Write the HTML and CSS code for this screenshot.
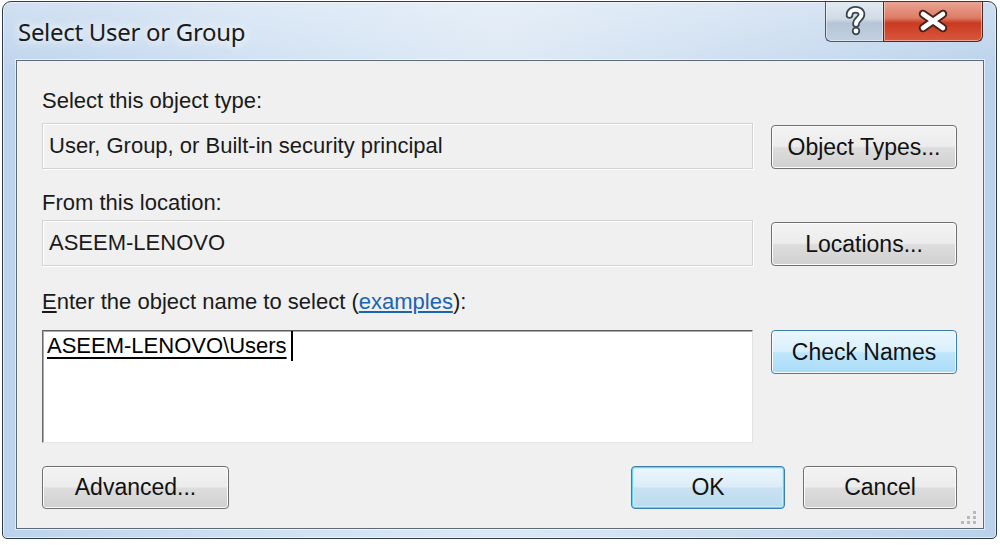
FILE: index.html
```html
<!DOCTYPE html>
<html>
<head>
    <meta charset="UTF-8">
    <title>Select User or Group</title>
    <link rel="stylesheet" href="styles.css">
</head>
<body>
    <div class="window">
        <!-- 标题栏 -->
        <div class="titlebar">
            <div class="title">Select User or Group</div>
            <div class="caption-btns">
                <div class="cap-btn help">
                    <svg width="26" height="32" viewBox="-13 -16 26 32">
                        <path d="M-5.5 -6 C-5.5 -13 6.5 -13 6.5 -6.5 C6.5 -2.5 1 -1.8 1 3" fill="none" stroke="#3a4552" stroke-width="7.5" stroke-linecap="round"/>
                        <circle cx="1" cy="10" r="4.2" fill="#3a4552"/>
                        <path d="M-5.5 -6 C-5.5 -13 6.5 -13 6.5 -6.5 C6.5 -2.5 1 -1.8 1 3" fill="none" stroke="#fff" stroke-width="4" stroke-linecap="round"/>
                        <circle cx="1" cy="10" r="2.4" fill="#fff"/>
                    </svg>
                </div>
                <div class="cap-btn close">
                    <svg width="34" height="26" viewBox="-17 -13 34 26">
                        <path d="M-10 -7 L10 7 M10 -7 L-10 7" stroke="#4a2118" stroke-width="8.5" stroke-linecap="round"/>
                        <path d="M-10 -7 L10 7 M10 -7 L-10 7" stroke="#fff" stroke-width="4.6" stroke-linecap="round"/>
                    </svg>
                </div>
            </div>
        </div>

        <div class="client">
            <div class="section">
                <div class="label lbl-type">Select this object type:</div>
                <div class="row">
                    <div class="static-box">User, Group, or Built-in security principal</div>
                    <button class="btn">Object Types...</button>
                </div>
            </div>

            <div class="section sec-location">
                <div class="label lbl-location">From this location:</div>
                <div class="row">
                    <div class="static-box">ASEEM-LENOVO</div>
                    <button class="btn">Locations...</button>
                </div>
            </div>

            <div class="section sec-names">
                <div class="label lbl-names"><u>E</u>nter the object name to select (<a href="#" class="link">examples</a>):</div>
                <div class="row row-top">
                    <div class="name-input">
                        <span class="resolved">ASEEM-LENOVO\Users</span><span class="caret"></span>
                    </div>
                    <button class="btn btn-hot">Check Names</button>
                </div>
            </div>

            <div class="footer">
                <button class="btn btn-advanced">Advanced...</button>
                <button class="btn btn-default btn-ok">OK</button>
                <button class="btn btn-cancel">Cancel</button>
            </div>

            <svg class="grip" width="20" height="14" viewBox="0 0 20 14">
                <rect x="14" y="0" width="3" height="3" fill="#b9b9b9"/>
                <rect x="8" y="5" width="3" height="3" fill="#b9b9b9"/>
                <rect x="14" y="5" width="3" height="3" fill="#b9b9b9"/>
                <rect x="2" y="10" width="3" height="3" fill="#b9b9b9"/>
                <rect x="8" y="10" width="3" height="3" fill="#b9b9b9"/>
                <rect x="14" y="10" width="3" height="3" fill="#b9b9b9"/>
            </svg>
        </div>
    </div>
</body>
</html>
```

FILE: styles.css
```css
* {
    box-sizing: border-box;
    margin: 0;
    padding: 0;
}

body {
    background: #ffffff;
    font-family: 'Liberation Sans', Arial, sans-serif;
}

/* 窗口外框 */
.window {
    width: 995px;
    height: 538px;
    margin: 1px 0 0 2px;
    border: 1px solid #2f3c48;
    border-radius: 9px 9px 5px 5px;
    background:
        linear-gradient(180deg, rgba(255,255,255,0.3) 0%, rgba(255,255,255,0) 14%),
        linear-gradient(90deg, #bcd3ec 0%, #cfe0f2 25%, #dce8f5 50%, #c9dbef 78%, #b9d1eb 100%);
    box-shadow: inset 0 0 0 1px rgba(255,255,255,0.55);
    display: flex;
    flex-direction: column;
    overflow: hidden;
}

.titlebar {
    height: 58px;
    display: flex;
    align-items: flex-start;
    padding-left: 15px;
}

.title {
    font-family: 'Noto Sans', 'Open Sans', sans-serif;
    font-size: 24px;
    color: #1b1b1b;
    margin-top: 13px;
    letter-spacing: -0.3px;
    text-shadow: 0 0 8px rgba(255,255,255,0.95), 0 0 14px rgba(255,255,255,0.8);
}

.caption-btns {
    margin-left: auto;
    margin-right: 13px;
    margin-top: -1px;
    display: flex;
}

.cap-btn {
    height: 41px;
    display: flex;
    align-items: center;
    justify-content: center;
    border: 1px solid #4b5867;
    border-top: none;
    box-shadow: inset 0 0 0 1px rgba(255,255,255,0.45);
}

.cap-btn.help {
    width: 58px;
    border-radius: 0 0 0 6px;
    border-right: none;
    background: linear-gradient(180deg, #e3eaf2 0%, #d1dbe6 45%, #b6c5d6 55%, #c2d1e1 100%);
}

.cap-btn.close {
    width: 100px;
    border-radius: 0 0 6px 0;
    border-color: #4d2a24;
    background: linear-gradient(180deg, #eaa796 0%, #dd7c66 42%, #c93a22 55%, #d8583d 100%);
}

/* 客户区 */
.client {
    position: relative;
    flex: 1;
    margin: 0 12px 9px 13px;
    background: #f0f0f0;
    border: 1px solid #5d6b79;
    box-shadow: 0 0 0 1px rgba(255,255,255,0.6);
    padding: 28px 26px 19px 25px;
    display: flex;
    flex-direction: column;
}

.label {
    font-size: 22px;
    line-height: 24px;
    color: #1a1a1a;
}

.lbl-type {
    margin-bottom: 10px;
}

.lbl-location {
    margin-bottom: 5px;
}

.lbl-names {
    margin-bottom: 16px;
}

.sec-location {
    margin-top: 22px;
}

.sec-names {
    margin-top: 24px;
}

.link {
    color: #1a64b4;
    text-decoration: underline;
}

.row {
    display: grid;
    grid-template-columns: 711px 186px;
    column-gap: 18px;
    align-items: end;
}

.row-top {
    align-items: start;
}

.static-box {
    height: 46px;
    display: flex;
    align-items: center;
    padding-left: 6px;
    font-size: 22px;
    color: #1a1a1a;
    border: 1px solid #d3d3d3;
    box-shadow: inset 1px 1px 0 #ffffff, 1px 1px 0 #ffffff;
    white-space: nowrap;
}

.name-input {
    height: 113px;
    background: #ffffff;
    border: 1px solid;
    border-color: #5f5f5f #e2e2e2 #e6e6e6 #6a6a6a;
    box-shadow: inset 1px 1px 0 #a9a9a9;
    padding: 3px 0 0 4px;
    font-size: 22px;
    line-height: 24px;
    color: #000;
    display: flex;
    align-items: flex-start;
}

.resolved {
    text-decoration: underline;
    text-underline-offset: 4px;
    text-decoration-thickness: 2px;
}

.caret {
    width: 2px;
    height: 30px;
    background: #000;
    margin-left: 4px;
    margin-top: -3px;
}

/* 按钮 */
.btn {
    height: 44px;
    font-family: 'Liberation Sans', Arial, sans-serif;
    font-size: 23px;
    color: #111;
    border: 1px solid #707070;
    border-radius: 4px;
    background: linear-gradient(180deg, #f3f3f3 0%, #ececec 48%, #dddddd 52%, #d0d0d0 100%);
    box-shadow: inset 0 0 0 1px #fbfbfb;
}

.btn-hot {
    border-color: #3c7fb1;
    background: linear-gradient(180deg, #eaf6fd 0%, #d9f0fc 48%, #bee6fd 52%, #a9dbf6 100%);
}

.footer {
    margin-top: auto;
    display: flex;
}

.footer .btn {
    height: 43px;
}

.btn-advanced {
    width: 187px;
}

.btn-ok {
    width: 154px;
    margin-left: auto;
}

.btn-cancel {
    width: 154px;
    margin-left: 18px;
}

.btn-default {
    border-color: #3c7fb1;
    background: linear-gradient(180deg, #ecf6fc 0%, #dcedf8 48%, #c9e2f3 52%, #bcdaef 100%);
    box-shadow: inset 0 0 0 1px #5fd3f3, inset 0 0 0 2px rgba(200,240,252,0.9);
}

.grip {
    position: absolute;
    right: 4px;
    bottom: 3px;
}
```
